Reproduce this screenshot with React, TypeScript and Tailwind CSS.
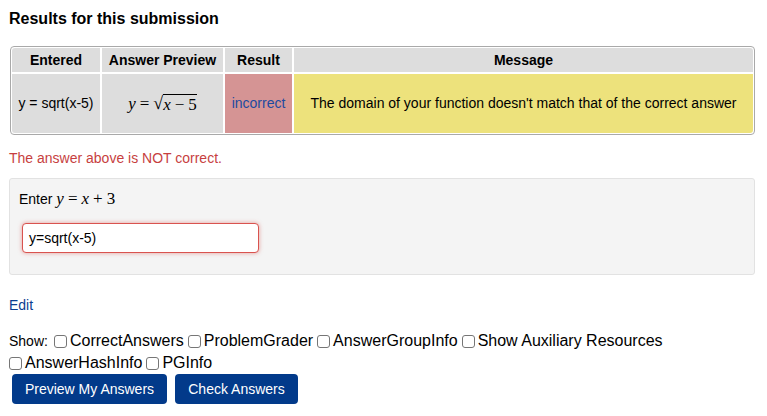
import React from 'react';

const sans = { fontFamily: '"Liberation Sans", Arial, sans-serif' };
const serif = { fontFamily: '"Liberation Serif", "DejaVu Serif", serif' };

// Small TeX-like inline math rendered with a serif italic font
const MathVar = ({ children }: { children: React.ReactNode }) => (
  <span className="italic" style={serif}>
    {children}
  </span>
);

const MathOp = ({ children }: { children: React.ReactNode }) => (
  <span className="mx-[4px]" style={serif}>
    {children}
  </span>
);

const Checkbox = ({ label }: { label: string }) => (
  <label className="flex items-center mr-[4px]">
    <span className="inline-block w-[13px] h-[13px] border border-[#767676] rounded-[3px] bg-white mr-[3px] mt-[1px]" />
    <span className="text-[16px] text-black leading-[22px]">{label}</span>
  </label>
);

export default function App() {
  return (
    <div className="w-[767px] h-[416px] bg-white text-black overflow-hidden" style={sans}>
      <div className="pl-[9px] pr-[12px] pt-[9px]">
        <h2 className="text-[16px] font-bold leading-[20px]">Results for this submission</h2>

        {/* Results table */}
        <div className="mt-[17px] ml-[1px] border border-[#a9a9a9] rounded-[4px] p-[1px]">
          <div className="grid grid-cols-[88px_121px_67px_1fr] gap-[2px] text-[14px]">
            <div className="h-[24px] bg-[#dddddd] font-bold flex items-center justify-center rounded-tl-[3px]">Entered</div>
            <div className="h-[24px] bg-[#dddddd] font-bold flex items-center justify-center">Answer Preview</div>
            <div className="h-[24px] bg-[#dddddd] font-bold flex items-center justify-center">Result</div>
            <div className="h-[24px] bg-[#dddddd] font-bold flex items-center justify-center rounded-tr-[3px]">Message</div>

            <div className="h-[59px] bg-[#dddddd] flex items-center justify-center text-[14px] rounded-bl-[3px]">y = sqrt(x-5)</div>
            <div className="h-[59px] bg-[#dddddd] flex items-center justify-center text-[17px]">
              <MathVar>y</MathVar>
              <MathOp>=</MathOp>
              <span className="inline-flex items-end">
                <span style={serif} className="text-[18px] leading-[19px]">√</span>
                <span className="border-t border-black leading-[17px] pt-[1px]">
                  <MathVar>x</MathVar>
                  <MathOp>−</MathOp>
                  <span style={serif}>5</span>
                </span>
              </span>
            </div>
            <div className="h-[59px] bg-[#d59494] flex items-center justify-center text-[#1d4aa0]">incorrect</div>
            <div className="h-[59px] bg-[#ede27c] flex items-center justify-center rounded-br-[3px]">
              The domain of your function doesn't match that of the correct answer
            </div>
          </div>
        </div>

        <p className="mt-[14px] text-[14px] text-[#c73f3f] leading-[18px]">The answer above is NOT correct.</p>

        {/* Problem box */}
        <div className="mt-[11px] bg-[#f4f4f4] border border-[#e2e2e2] rounded-[3px] h-[97px] pl-[9px] pt-[10px]">
          <div className="text-[14px] leading-[20px]">
            Enter{' '}
            <span className="text-[17px]">
              <MathVar>y</MathVar>
              <MathOp>=</MathOp>
              <MathVar>x</MathVar>
              <MathOp>+</MathOp>
              <span style={serif}>3</span>
            </span>
          </div>
          <div className="mt-[14px] ml-[3px] w-[237px] h-[30px] bg-white border border-[#d9534f] rounded-[4px] shadow-[0_0_4px_rgba(217,83,79,0.55)] flex items-center pl-[6px] text-[14px]">
            y=sqrt(x-5)
          </div>
        </div>

        <div className="mt-[21px] text-[14px] text-[#0c3d8f] leading-[18px]">Edit</div>

        {/* Display options */}
        <div className="mt-[16px]">
          <div className="flex items-center h-[22px]">
            <span className="text-[14px] mr-[6px] mt-[1px]">Show:</span>
            <Checkbox label="CorrectAnswers" />
            <Checkbox label="ProblemGrader" />
            <Checkbox label="AnswerGroupInfo" />
            <Checkbox label="Show Auxiliary Resources" />
          </div>
          <div className="flex items-center h-[22px]">
            <Checkbox label="AnswerHashInfo" />
            <Checkbox label="PGInfo" />
          </div>
        </div>

        <div className="flex gap-[8px] ml-[3px]">
          <button className="h-[30px] w-[155px] bg-[#023a8a] text-white text-[14px] rounded-[4px]">Preview My Answers</button>
          <button className="h-[30px] w-[123px] bg-[#023a8a] text-white text-[14px] rounded-[4px]">Check Answers</button>
        </div>
      </div>
    </div>
  );
}
